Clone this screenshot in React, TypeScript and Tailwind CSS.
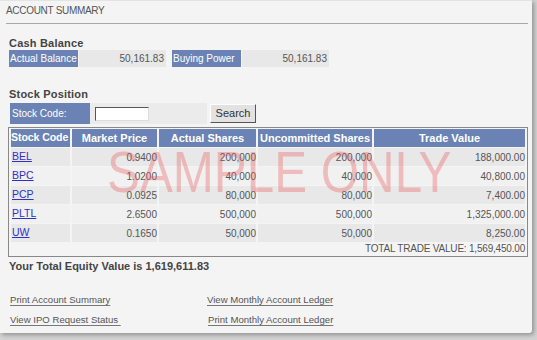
import React from 'react';

// account summary panel, old-school table layout

type Row = { code: string; price: string; actual: string; uncommitted: string; value: string };

const rows: Row[] = [
  { code: 'BEL', price: '0.9400', actual: '200,000', uncommitted: '200,000', value: '188,000.00' },
  { code: 'BPC', price: '1.0200', actual: '40,000', uncommitted: '40,000', value: '40,800.00' },
  { code: 'PCP', price: '0.0925', actual: '80,000', uncommitted: '80,000', value: '7,400.00' },
  { code: 'PLTL', price: '2.6500', actual: '500,000', uncommitted: '500,000', value: '1,325,000.00' },
  { code: 'UW', price: '0.1650', actual: '50,000', uncommitted: '50,000', value: '8,250.00' },
];

const font = { fontFamily: '"Liberation Sans", Arial, sans-serif' };

function BalanceCell({ label, value }: { label: string; value: string }) {
  return (
    <div className="flex h-[17px]">
      <div className="w-[69px] bg-[#6b83b4] text-white text-[10px] leading-[17px] pl-px">{label}</div>
      <div className="w-[87px] ml-px bg-[#e8e8e8] text-[#555] text-[10px] leading-[17px] text-right pr-[2px]">{value}</div>
    </div>
  );
}

function LinkText({ children, className = '' }: { children: React.ReactNode; className?: string }) {
  return (
    <a
      href="#"
      className={`block w-fit text-[#555] text-[9.6px] leading-[12px] underline underline-offset-[2px] decoration-[#777] ${className}`}
    >
      {children}
    </a>
  );
}

export default function App() {
  return (
    <div className="w-[537px] h-[340px] bg-[#d2d2d2] overflow-hidden" style={font}>
      <div className="w-[532px] h-[333px] bg-[#f4f4f4] border-t border-[#e4e4e4] rounded-br-[3px] shadow-[2px_2px_4px_rgba(0,0,0,0.3)] overflow-hidden">
        <div className="h-[22px] pl-[6px] pt-[3px] text-[10px] leading-[13px] tracking-[-0.3px] text-[#555]">ACCOUNT SUMMARY</div>
        <div className="ml-[6px] mr-[4px] h-px bg-[#a8a8a8]" />

        <div className="pl-[9px] pt-[13px]">
          <div className="h-[13px] text-[11px] leading-[13px] font-bold text-[#444] tracking-[0.2px]">Cash Balance</div>
          <div className="flex gap-[6px]">
            <BalanceCell label="Actual Balance" value="50,161.83" />
            <BalanceCell label="Buying Power" value="50,161.83" />
          </div>

          <div className="mt-[21px] h-[13px] text-[11px] leading-[13px] font-bold text-[#444] tracking-[0.2px]">Stock Position</div>
          <div className="mt-[2px] flex h-[21px] items-center">
            <div className="ml-px w-[80px] h-full bg-[#6b83b4] text-white text-[10px] leading-[21px] pl-[2px]">Stock Code:</div>
            <div className="w-[117px] h-full bg-[#ebebeb] flex items-center pl-[5px]">
              <input className="w-[54px] h-[14px] bg-white border border-t-[#555] border-l-[#555] border-b-[#ddd] border-r-[#ddd] outline-none" />
            </div>
            <button className="ml-[3px] w-[46px] h-[19px] bg-[#e2e2e2] border border-t-[#fff] border-l-[#fff] border-b-[#555] border-r-[#555] text-[11px] text-[#333]">
              Search
            </button>
          </div>
        </div>

        <div className="relative ml-[8px] mt-[3px] w-[520px]">
          <table className="w-[520px] border border-[#888] border-separate border-spacing-x-[2px] border-spacing-y-px text-[10px] table-fixed">
            <colgroup>
              <col className="w-[59px]" />
              <col className="w-[85px]" />
              <col className="w-[97px]" />
              <col className="w-[114px]" />
              <col className="w-[151px]" />
            </colgroup>
            <thead>
              <tr className="h-[18px] bg-[#6b83b4] text-white text-[11px] font-bold">
                <th className="p-0 text-left whitespace-nowrap overflow-hidden text-[10.6px] tracking-[-0.1px]">Stock Code</th>
                <th className="p-0">Market Price</th>
                <th className="p-0">Actual Shares</th>
                <th className="p-0">Uncommitted Shares</th>
                <th className="p-0">Trade Value</th>
              </tr>
            </thead>
            <tbody className="text-[#555]">
              {rows.map((r, i) => (
                <tr key={r.code} className={`h-[18px] ${i % 2 === 0 ? 'bg-[#e8e8e8]' : 'bg-[#f1f1f1]'}`}>
                  <td className="p-0 pl-px">
                    <a href="#" className="text-[#3030c8] underline text-[10.5px]">{r.code}</a>
                  </td>
                  <td className="p-0 text-right">{r.price}</td>
                  <td className="p-0 text-right">{r.actual}</td>
                  <td className="p-0 text-right">{r.uncommitted}</td>
                  <td className="p-0 text-right">{r.value}</td>
                </tr>
              ))}
              <tr className="h-[12px]">
                <td colSpan={5} className="p-0 text-right leading-[12px] tracking-[-0.2px]">TOTAL TRADE VALUE: 1,569,450.00</td>
              </tr>
            </tbody>
          </table>
          <div className="absolute left-[99px] top-[16px] pointer-events-none select-none origin-left scale-x-[0.85] text-[58px] leading-none whitespace-nowrap text-[#e85a5a]/35">
            SAMPLE ONLY
          </div>
        </div>

        <div className="pl-[9px] mt-[3px] h-[13px] text-[11px] leading-[13px] font-bold text-[#444]">
          Your Total Equity Value is 1,619,611.83
        </div>

        <div className="mt-[21px] pl-[10px] grid grid-cols-[197px_200px] gap-y-[8px]">
          <LinkText>Print Account Summary</LinkText>
          <LinkText>View Monthly Account Ledger</LinkText>
          <LinkText>View IPO Request Status&nbsp;</LinkText>
          <LinkText className="ml-px">Print Monthly Account Ledger</LinkText>
        </div>
      </div>
    </div>
  );
}
